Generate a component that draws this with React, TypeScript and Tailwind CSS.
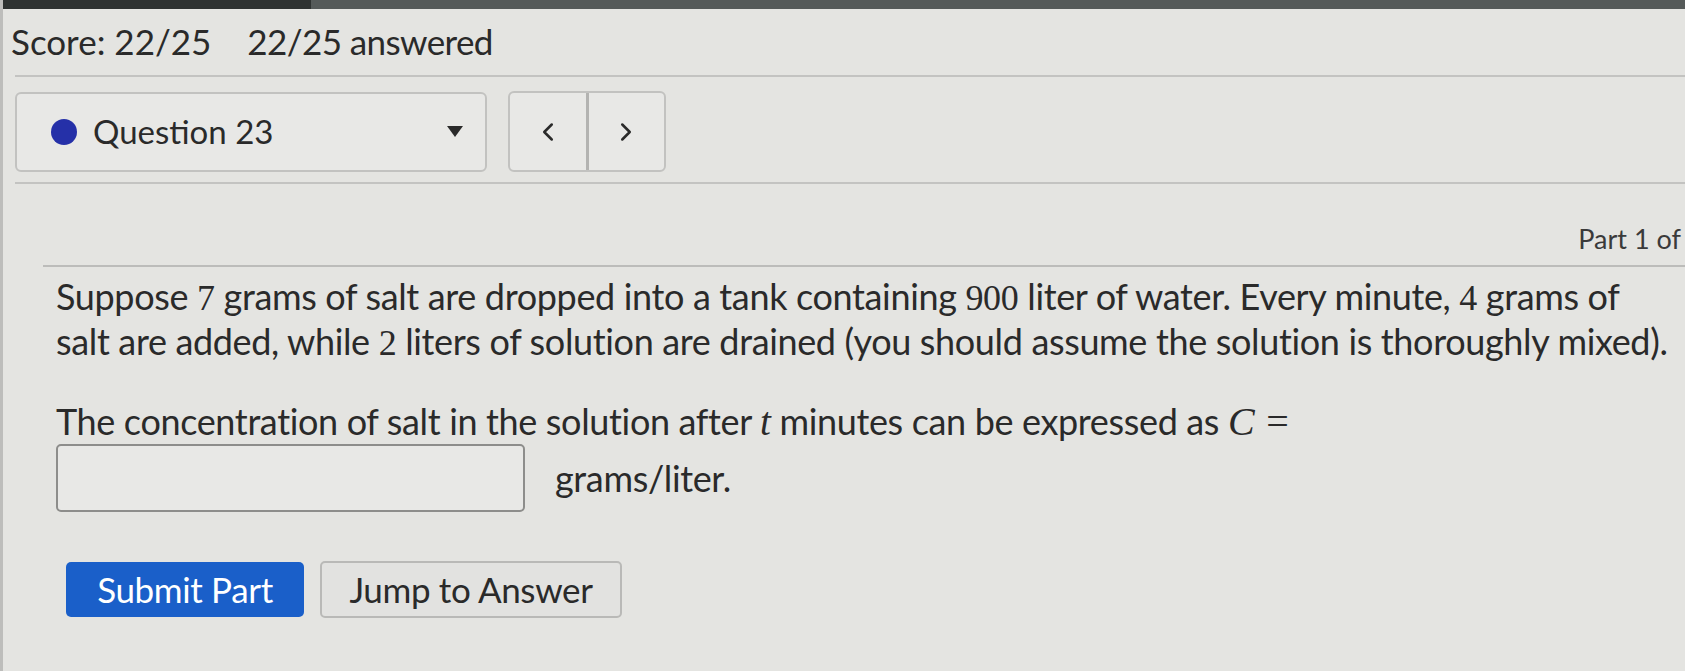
import { ChevronLeft, ChevronRight } from "lucide-react";

const FONT = "font-['Lato','Liberation_Sans',sans-serif]";
const MATH = "font-['Liberation_Serif','DejaVu_Serif',serif] leading-none";

export default function App() {
  return (
    <div
      className={`w-[1685px] h-[671px] overflow-hidden bg-[#e4e4e1] text-[#2a2a2a] ${FONT} border-l-[3px] border-[#bdbdbb]`}
    >
      {/* screen bezel strip */}
      <div className="flex h-[9px]">
        <div className="w-[308px] bg-[#2e3231]" />
        <div className="flex-1 bg-[#555a59]" />
      </div>

      {/* score header */}
      <div className="flex h-[66px] items-start gap-[36px] pl-[8px] pt-[6px] text-[35px]">
        <span>Score: 22/25</span>
        <span className="tracking-[-0.6px]">22/25 answered</span>
      </div>
      <div className="ml-[12px] border-t-2 border-[#c3c3c1]" />

      {/* question picker */}
      <div className="mt-[14px] flex items-center gap-[21px] pl-[12px]">
        <button className="flex h-[80px] w-[472px] items-center rounded-[6px] border-2 border-[#c2c2c0] bg-[#e8e8e6] pl-[34px] pr-[22px]">
          <span className="h-[26px] w-[26px] rounded-full bg-[#2530a8]" />
          <span className="ml-[16px] text-[33px]">Question 23</span>
          <span className="ml-auto h-0 w-0 border-x-[8px] border-t-[11px] border-x-transparent border-t-[#2a2a2a]" />
        </button>
        <div className="flex h-[81px] w-[158px] rounded-[6px] border-2 border-[#c2c2c0] bg-[#e8e8e6]">
          <button className="flex flex-1 items-center justify-center">
            <ChevronLeft className="h-[30px] w-[30px]" strokeWidth={2} />
          </button>
          <div className="w-[3px] bg-[#b3b3b1]" />
          <button className="flex flex-1 items-center justify-center">
            <ChevronRight className="h-[30px] w-[30px]" strokeWidth={2} />
          </button>
        </div>
      </div>
      <div className="mt-[10px] ml-[12px] border-t-2 border-[#c3c3c1]" />

      {/* part indicator */}
      <div className="flex h-[81px] items-end justify-end pb-[6px] text-[27px] text-[#3a3a3a]">
        <span className="mr-[4px]">Part 1 of</span>
      </div>
      <div className="ml-[40px] border-t-2 border-[#bcbcba]" />

      {/* question body */}
      <div className="pl-[53px] pt-[7px] text-[36px] leading-[45px] tracking-[-0.35px]">
        <p className="whitespace-nowrap">
          Suppose <span className={MATH}>7</span> grams of salt are dropped into a tank containing{" "}
          <span className={MATH}>900</span> liter of water. Every minute, <span className={MATH}>4</span> grams of
          <br />
          salt are added, while <span className={MATH}>2</span> liters of solution are drained (you should assume the
          solution is thoroughly mixed).
        </p>
        <p className="mt-[35px]">
          The concentration of salt in the solution after <span className={`${MATH} italic text-[39px]`}>t</span>{" "}
          minutes can be expressed as <span className={`${MATH} italic text-[40px]`}>C</span>
          <span className={`${MATH} ml-[12px] text-[40px]`}>=</span>
        </p>
        <div className="flex items-center gap-[30px]">
          <input className="h-[68px] w-[469px] rounded-[5px] border-2 border-[#8d8d8b] bg-[#e8e8e6]" />
          <span>grams/liter.</span>
        </div>
        <div className="mt-[49px] flex items-center gap-[16px] pl-[10px]">
          <button className="h-[55px] w-[238px] rounded-[5px] bg-[#1a5fc9] text-[35px] text-white">Submit Part</button>
          <button className="h-[57px] w-[302px] rounded-[5px] border-2 border-[#b9b9b7] bg-[#e2e2e0] text-[35px]">
            Jump to Answer
          </button>
        </div>
      </div>
    </div>
  );
}
